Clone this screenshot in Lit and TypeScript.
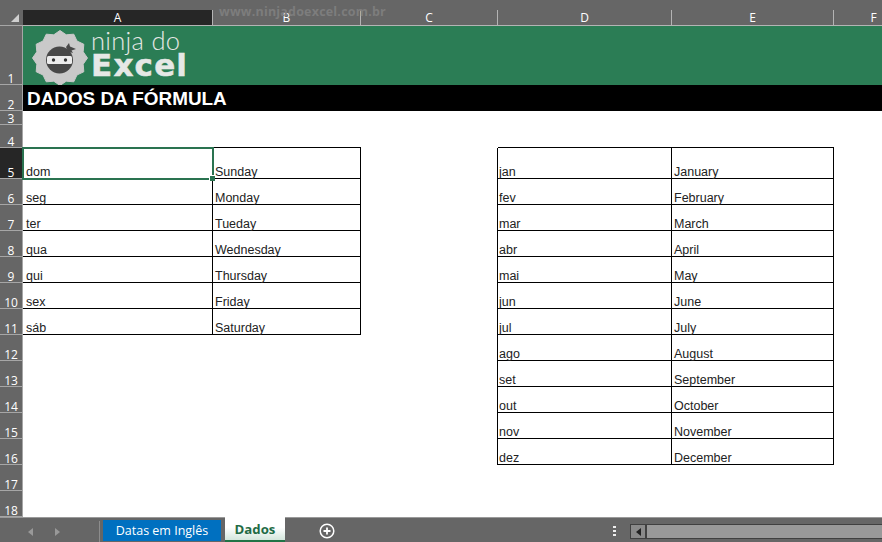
import { LitElement, html, css, svg } from "lit";
import { customElement } from "lit/decorators.js";

const COLS = ["A", "B", "C", "D", "E", "F"];
const ROWS = Array.from({ length: 18 }, (_, i) => i + 1);
const LEFT: [string, string][] = [
  ["dom", "Sunday"], ["seg", "Monday"], ["ter", "Tueday"], ["qua", "Wednesday"],
  ["qui", "Thursday"], ["sex", "Friday"], ["sáb", "Saturday"],
];
const RIGHT: [string, string][] = [
  ["jan", "January"], ["fev", "February"], ["mar", "March"], ["abr", "April"], ["mai", "May"], ["jun", "June"],
  ["jul", "July"], ["ago", "August"], ["set", "September"], ["out", "October"], ["nov", "November"], ["dez", "December"],
];

function badge(): string {
  const pts: string[] = [];
  const n = 12;
  for (let i = 0; i < n * 2; i++) {
    const a = (i / (n * 2)) * Math.PI * 2 - Math.PI / 2;
    const r = i % 2 === 0 ? 27.5 : 24;
    pts.push(`${(28 + Math.cos(a) * r).toFixed(2)},${(28 + Math.sin(a) * r).toFixed(2)}`);
  }
  return pts.join(" ");
}

@customElement("app-root")
export class AppRoot extends LitElement {
  static styles = css`
    :host { display: block; width: 882px; height: 542px; overflow: hidden; background: #fff; font-family: "Liberation Sans", Arial, sans-serif; }
    .page { position: relative; display: flex; flex-direction: column; width: 882px; height: 542px; overflow: hidden; }
    .sheet { display: grid; grid-template-columns: 23px 190px 148px 137px 174px 162px 80px; grid-template-rows: 26px 59px 26px 14px 23px 31px repeat(13, 26px); background: #fff; height: 517px; width: 914px; flex: none; }
    .corner { background: #666; padding: 14px 0 0 11px; box-sizing: border-box; height: 26px; border-bottom: 1px solid #a6a6a6; }
    .corner i { display: block; width: 0; height: 0; border-left: 8px solid transparent; border-bottom: 8px solid #cfcfcf; }
    .chwrap { background: #666; padding-top: 10px; height: 26px; box-sizing: border-box; }
    .ch { height: 16px; box-sizing: border-box; border-right: 1px solid #b4b4b4; border-bottom: 1px solid #b4b4b4; color: #fff; font: 12px/15px "Open Sans", sans-serif; text-align: center; }
    .ch.sel { background: #262626; }
    .rh { background: #666; color: #fff; font: 12px/10px "Open Sans", sans-serif; box-sizing: border-box; border-right: 1px solid #a6a6a6; border-bottom: 1px solid #a6a6a6; display: flex; align-items: flex-end; justify-content: center; }
    .rh.sel { background: #262626; }
    .banner { grid-column: 2 / -1; background: #2b7d55; display: flex; align-items: flex-start; padding: 4px 0 0 9px; box-sizing: border-box; gap: 3px; }
    .badge { width: 56px; height: 56px; flex: none; }
    .logo { display: flex; flex-direction: column; color: #e6e8e6; margin-top: -2px; }
    .logo .l1 { font: 300 25.5px/24px Lato, sans-serif; letter-spacing: .3px; }
    .logo .l2 { font: 700 31px/27px "DejaVu Sans", sans-serif; letter-spacing: 1.2px; -webkit-text-stroke: .5px #e6e8e6; }
    .title { grid-column: 2 / -1; background: #000; color: #fff; font: bold 18.9px/27px "Liberation Sans", Arial, sans-serif; padding-left: 4px; height: 26px; overflow: hidden; }
    .cell { box-sizing: border-box; font-size: 12.5px; line-height: 11px; color: #222; display: flex; align-items: flex-end; padding: 0 0 0 2px; position: relative; white-space: nowrap; }
    .b-b { border-bottom: 1px solid #000; }
    .b-r { border-right: 1px solid #000; }
    .a { padding-left: 3px; }
    .d { padding-left: 1px; }
    .select { position: absolute; left: -1px; top: -1px; right: -2px; bottom: -2px; border: 2px solid #2a7350; z-index: 2; }
    .select::after { content: ""; position: absolute; right: -3px; bottom: -3px; width: 5px; height: 5px; background: #2a7350; border: 1px solid #fff; border-width: 1px 0 0 1px; }
    .wm { position: absolute; left: 219px; top: 4px; font: bold 12.5px/16px "Open Sans", sans-serif; color: #7d7d7d; letter-spacing: .2px; }
    .bar { height: 25px; background: #666; border-top: 1px solid #9a9a9a; box-sizing: border-box; display: flex; align-items: flex-start; flex: none; }
    .nav { width: 100px; height: 21px; flex: none; box-sizing: border-box; border-right: 1px solid #8c8c8c; margin-top: 3px; display: flex; align-items: center; padding: 0 0 0 28px; gap: 22px; }
    .nav i { width: 0; height: 0; border-top: 4px solid transparent; border-bottom: 4px solid transparent; }
    .nav i.l { border-right: 5px solid #999; }
    .nav i.r { border-left: 5px solid #999; }
    .tab { font: 12.5px/21px "Open Sans", sans-serif; text-align: center; box-sizing: border-box; }
    .t1 { margin: 2px 0 0 3px; width: 118px; background: #0070c0; color: #fff; }
    .t2 { margin: -1px 0 0 4px; width: 60px; height: 25px; background: linear-gradient(#fff 45%, #d3e6dc); color: #1f6b45; font-weight: 700; font-size: 13.2px; border-bottom: 2px solid #217346; line-height: 24px; }
    .plus { margin: 5px 0 0 34px; width: 16px; height: 16px; flex: none; }
    .dots { margin: 8px 0 0 278px; width: 3px; display: flex; flex-direction: column; gap: 2px; }
    .dots i { width: 3px; height: 2px; background: #eee; }
    .scroll { margin: 6px 0 0 14px; flex: 1; height: 15px; background: #999; border: 1px solid #404040; border-right: 0; box-sizing: border-box; display: flex; }
    .sbtn { width: 14px; background: #8a8a8a; border-right: 2px solid #404040; display: flex; align-items: center; justify-content: center; }
    .sbtn i { width: 0; height: 0; border-top: 4px solid transparent; border-bottom: 4px solid transparent; border-right: 5px solid #222; }
  `;

  private cellFor(r: number, c: number) {
    let text = "";
    let cls = "cell";
    if (c <= 1) {
      if (r >= 4 && r <= 11) cls += " b-b";
      if (r >= 5 && r <= 11) { cls += " b-r"; text = LEFT[r - 5][c]; }
      if (c === 0) cls += " a";
    } else if (c === 2) {
      if (r >= 5 && r <= 16) cls += " b-r";
    } else if (c === 3 || c === 4) {
      if (r >= 4 && r <= 16) cls += " b-b";
      if (r >= 5 && r <= 16) { cls += " b-r"; text = RIGHT[r - 5][c - 3]; }
      if (c === 3) cls += " d";
    }
    const sel = r === 5 && c === 0;
    return html`<div class=${cls}>${text}${sel ? html`<div class="select"></div>` : ""}</div>`;
  }

  render() {
    return html`<div class="page">
      <div class="sheet">
        <div class="corner"><i></i></div>
        ${COLS.map((c, i) => html`<div class="chwrap"><div class="ch ${i === 0 ? "sel" : ""}">${c}</div></div>`)}
        ${ROWS.map((r) => html`
          <div class="rh ${r === 5 ? "sel" : ""}">${r}</div>
          ${r === 1
            ? html`<div class="banner">
                <svg class="badge" viewBox="0 0 56 56">
                  ${svg`<polygon points=${badge()} fill="#c9c9c9" stroke="#c9c9c9" stroke-width="1" stroke-linejoin="round"></polygon>
                  <circle cx="27.5" cy="30" r="13.5" fill="#484848"></circle>
                  <path d="M34 17 L37 13 L38 16.500 L44 19 L39.500 20.500 L41 23 L36 21.500 Z" fill="#484848"></path>
                  <rect x="15" y="26" width="25" height="8" rx="1.500" fill="#ececec"></rect>
                  <circle cx="21.500" cy="30" r="1.700" fill="#333"></circle>
                  <circle cx="33.500" cy="30" r="1.700" fill="#333"></circle>`}
                </svg>
                <div class="logo"><span class="l1">ninja do</span><span class="l2">Excel</span></div>
              </div>`
            : r === 2
            ? html`<div class="title">DADOS DA FÓRMULA</div>`
            : html`${[0, 1, 2, 3, 4, 5].map((c) => this.cellFor(r, c))}`}
        `)}
      </div>
      <div class="wm">www.ninjadoexcel.com.br</div>
      <div class="bar">
        <div class="nav"><i class="l"></i><i class="r"></i></div>
        <div class="tab t1">Datas em Inglês</div>
        <div class="tab t2">Dados</div>
        <svg class="plus" viewBox="0 0 16 16">
          <circle cx="8" cy="8" r="6.800" fill="none" stroke="#fff" stroke-width="1.500"></circle>
          <path d="M4.500 8H11.500M8 4.500V11.500" stroke="#fff" stroke-width="1.800"></path>
        </svg>
        <div class="dots"><i></i><i></i><i></i></div>
        <div class="scroll"><div class="sbtn"><i></i></div></div>
      </div>
    </div>`;
  }
}
